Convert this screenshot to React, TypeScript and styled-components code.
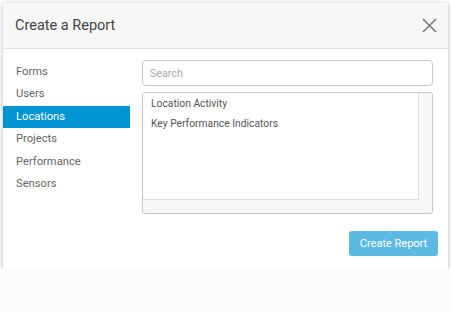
import styled, { createGlobalStyle } from 'styled-components';

const GlobalStyle = createGlobalStyle`
  body {
    margin: 0;
    background: #fcfcfc;
    font-family: Roboto, "Liberation Sans", sans-serif;
  }
`;

const Page = styled.div`
  padding: 3px 3px 0 3px;
`;

const Modal = styled.div`
  width: 445px;
  background: #fff;
  border-radius: 2px;
  box-shadow: 0 1px 4px rgba(0, 0, 0, 0.28);
`;

const Header = styled.div`
  height: 45px;
  display: flex;
  align-items: center;
  justify-content: space-between;
  padding: 0 10px 0 12px;
  background: #f7f7f7;
  border-bottom: 1px solid #e0e0e0;
`;

const Title = styled.h4`
  margin: 0;
  font-size: 14.5px;
  font-weight: 400;
  color: #444;
`;

const Close = styled.button`
  border: 0;
  background: none;
  padding: 0;
  width: 18px;
  height: 18px;
  display: flex;
  align-items: center;
  justify-content: center;
  cursor: pointer;
`;

const Body = styled.div`
  display: grid;
  grid-template-columns: 127px 1fr;
  column-gap: 12px;
  padding: 11px 15px 0 0;
`;

const Nav = styled.ul`
  list-style: none;
  margin: 0;
  padding: 0;
  margin-top: 1px;
`;

const NavItem = styled.li<{ $active?: boolean }>`
  height: 22.4px;
  line-height: 22.4px;
  padding-left: 13px;
  font-size: 11.2px;
  color: ${({ $active }) => ($active ? '#fff' : '#666')};
  background: ${({ $active }) => ($active ? '#0394d3' : 'transparent')};
`;

const Content = styled.div`
  display: flex;
  flex-direction: column;
`;

const Search = styled.input`
  box-sizing: border-box;
  height: 26px;
  width: 291px;
  border: 1px solid #c8c8c8;
  border-radius: 4px;
  padding: 0 7px;
  font-family: inherit;
  font-size: 10.7px;
  color: #333;
  outline: none;
  &::placeholder {
    color: #aaa;
  }
`;

const ListBox = styled.div`
  box-sizing: border-box;
  margin-top: 6px;
  width: 291px;
  height: 122px;
  border: 1px solid #c8c8c8;
  border-radius: 3px;
  background: #f8f8f8;
  overflow: hidden;
`;

const ListInner = styled.div`
  width: 275px;
  height: 105px;
  background: #fff;
  border-right: 1px solid #dedede;
  border-bottom: 1px solid #dedede;
  padding-top: 1px;
`;

const ListItem = styled.div`
  height: 20px;
  line-height: 20px;
  padding-left: 8px;
  font-size: 10.3px;
  color: #555;
`;

const Footer = styled.div`
  display: flex;
  justify-content: flex-end;
  padding: 17px 10px 13px 0;
`;

const PrimaryButton = styled.button`
  height: 25px;
  width: 89px;
  border: 0;
  border-radius: 3px;
  background: #5cbae2;
  color: #fff;
  font-family: inherit;
  font-size: 11px;
  padding: 0;
  cursor: pointer;
`;

const navItems = ['Forms', 'Users', 'Locations', 'Projects', 'Performance', 'Sensors'];
const reports = ['Location Activity', 'Key Performance Indicators'];

export default function App() {
  return (
    <Page>
      <GlobalStyle />
      <Modal>
        <Header>
          <Title>Create a Report</Title>
          <Close aria-label="Close">
            <svg width="15" height="15" viewBox="0 0 15 15">
              <path d="M1 1L14 14M14 1L1 14" stroke="#777" strokeWidth="1.5" />
            </svg>
          </Close>
        </Header>
        <Body>
          <Nav>
            {navItems.map((n) => (
              <NavItem key={n} $active={n === 'Locations'}>
                {n}
              </NavItem>
            ))}
          </Nav>
          <Content>
            <Search placeholder="Search" />
            <ListBox>
              <ListInner>
                {reports.map((r) => (
                  <ListItem key={r}>{r}</ListItem>
                ))}
              </ListInner>
            </ListBox>
          </Content>
        </Body>
        <Footer>
          <PrimaryButton>Create Report</PrimaryButton>
        </Footer>
      </Modal>
    </Page>
  );
}
